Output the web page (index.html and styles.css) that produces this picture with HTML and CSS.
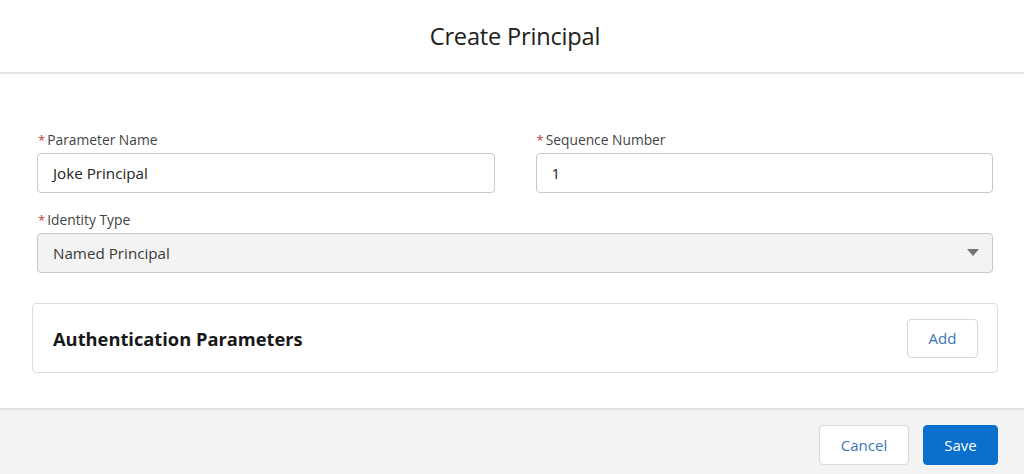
FILE: index.html
```html
<!DOCTYPE html>
<html lang="en">
<head>
<meta charset="utf-8">
<title>Create Principal</title>
<link rel="stylesheet" href="styles.css">
</head>
<body>
<div class="modal">
  <header class="modal-header">
    <h1 class="modal-title">Create Principal</h1>
  </header>
  <main class="modal-body">
    <div class="row two">
      <div class="field">
        <label class="label"><abbr class="req">*</abbr>Parameter Name</label>
        <div class="input">Joke Principal</div>
      </div>
      <div class="field">
        <label class="label"><abbr class="req">*</abbr>Sequence Number</label>
        <div class="input">1</div>
      </div>
    </div>
    <div class="row">
      <div class="field">
        <label class="label"><abbr class="req">*</abbr>Identity Type</label>
        <div class="input select">
          <span>Named Principal</span>
          <svg class="caret" width="12" height="8" viewBox="0 0 12 8"><path d="M0 0H12L6 7Z" fill="#747474"/></svg>
        </div>
      </div>
    </div>
    <section class="card">
      <h2 class="card-title">Authentication Parameters</h2>
      <button class="btn neutral add">Add</button>
    </section>
  </main>
  <footer class="modal-footer">
    <button class="btn neutral">Cancel</button>
    <button class="btn brand">Save</button>
  </footer>
</div>
</body>
</html>
```

FILE: styles.css
```css
* { box-sizing: border-box; }
html, body { margin: 0; padding: 0; }
body {
  font-family: "Open Sans", "Noto Sans", "Liberation Sans", sans-serif;
  color: #181818;
  background: #fff;
  width: 1024px;
  height: 474px;
  overflow: hidden;
}
.modal { display: flex; flex-direction: column; height: 474px; }
.modal-header {
  height: 74px;
  border-bottom: 2px solid #e5e5e5;
  display: flex;
  align-items: center;
  justify-content: center;
  padding-left: 6px;
}
.modal-title {
  margin: 0;
  font-size: 23.6px;
  font-weight: 400;
  color: #202020;
  letter-spacing: -0.2px;
}
.modal-body {
  flex: 1;
  padding: 57px 26px 0 32px;
}
.row { display: flex; gap: 41px; padding: 0 5px; margin-bottom: 18px; }
.row .field { flex: 1; }
.label {
  display: block;
  font-size: 13.8px;
  color: #444;
  line-height: 18px;
  margin-bottom: 4px;
  margin-left: 1px;
}
.req { color: #c23934; text-decoration: none; margin-right: 2px; font-size: 13px; }
.input {
  height: 40px;
  border: 1px solid #c9c9c9;
  border-radius: 4px;
  padding: 0 15px;
  display: flex;
  align-items: center;
  font-size: 15.2px;
  color: #222;
  background: #fff;
}
.select {
  background: #f3f3f3;
  justify-content: space-between;
  color: #3a3a3a;
  padding-right: 13px;
}
.caret { display: block; }
.card {
  margin-top: 30px;
  height: 70px;
  border: 1px solid #dcdcdc;
  border-radius: 4px;
  display: flex;
  align-items: center;
  justify-content: space-between;
  padding: 0 19px 0 20px;
}
.card-title {
  margin: 0;
  font-size: 18.3px;
  font-weight: 700;
  color: #181818;
}
.btn {
  font-family: inherit;
  font-size: 15px;
  height: 40px;
  border-radius: 4px;
  padding: 0 16px;
  cursor: pointer;
}
.neutral {
  background: #fff;
  border: 1px solid #d8d8d8;
  color: #3a76b8;
}
.add { width: 71px; height: 39px; padding: 0; }
.brand {
  background: #0a70cc;
  border: 1px solid #0a70cc;
  color: #fff;
  width: 75px;
  padding: 0;
}
.modal-footer {
  height: 66px;
  background: #f3f3f3;
  border-top: 2px solid #e2e2e2;
  display: flex;
  justify-content: flex-end;
  align-items: center;
  gap: 14px;
  padding: 6px 26px 0 0;
}
.modal-footer .neutral { width: 90px; padding: 0; }
```
